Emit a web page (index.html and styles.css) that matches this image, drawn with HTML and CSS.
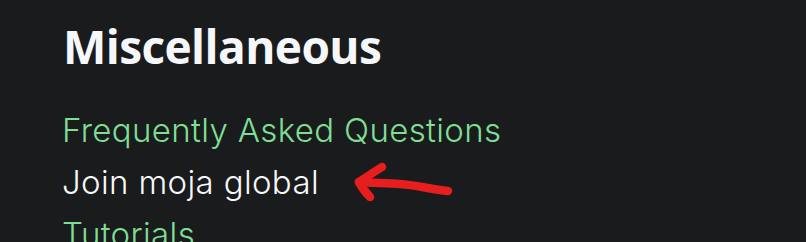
FILE: index.html
```html
<!DOCTYPE html>
<html>
<head>
<meta charset="utf-8">
<link rel="stylesheet" href="styles.css">
</head>
<body>
<section class="misc">
  <h2 class="title">Miscellaneous</h2>
  <ul class="links">
    <li><a class="link green" href="#">Frequently Asked Questions</a></li>
    <li><a class="link white" href="#">Join moja global</a></li>
    <li><a class="link green" href="#">Tutorials</a></li>
  </ul>
</section>
<svg class="arrow" width="806" height="242" viewBox="0 0 806 242">
  <path d="M448 191 C430 189 415 185 400 184 C385 183 370 183 359 182" fill="none" stroke="#e61e1e" stroke-width="8.5" stroke-linecap="round" stroke-linejoin="round"/>
  <path d="M382 167 C374 172 365 178 359 182 C362 188 366 193 370 197" fill="none" stroke="#e61e1e" stroke-width="8.5" stroke-linecap="round" stroke-linejoin="round"/>
</svg>
</body>
</html>
```
FILE: styles.css
```css
html, body {
  margin: 0;
  padding: 0;
  background: #1a1b1d;
  width: 806px;
  height: 242px;
  overflow: hidden;
}
.misc {
  padding: 16px 0 0 63px;
}
.title {
  margin: 0;
  font-family: "Open Sans", sans-serif;
  font-weight: 700;
  font-size: 46px;
  line-height: 60px;
  color: #f5f7fa;
  letter-spacing: -0.6px;
}
.links {
  list-style: none;
  margin: 28px 0 0 0;
  padding: 0;
}
.links li {
  height: 52px;
}
.link {
  font-family: "Inter", sans-serif;
  font-weight: 300;
  font-size: 33px;
  line-height: 52px;
  letter-spacing: 0.35px;
  text-decoration: none;
  display: block;
  margin-left: -1px;
}
.green { color: #7edf93; }
.white { color: #f7f8fa; }
.arrow {
  position: absolute;
  left: 0;
  top: 0;
  pointer-events: none;
}
```
